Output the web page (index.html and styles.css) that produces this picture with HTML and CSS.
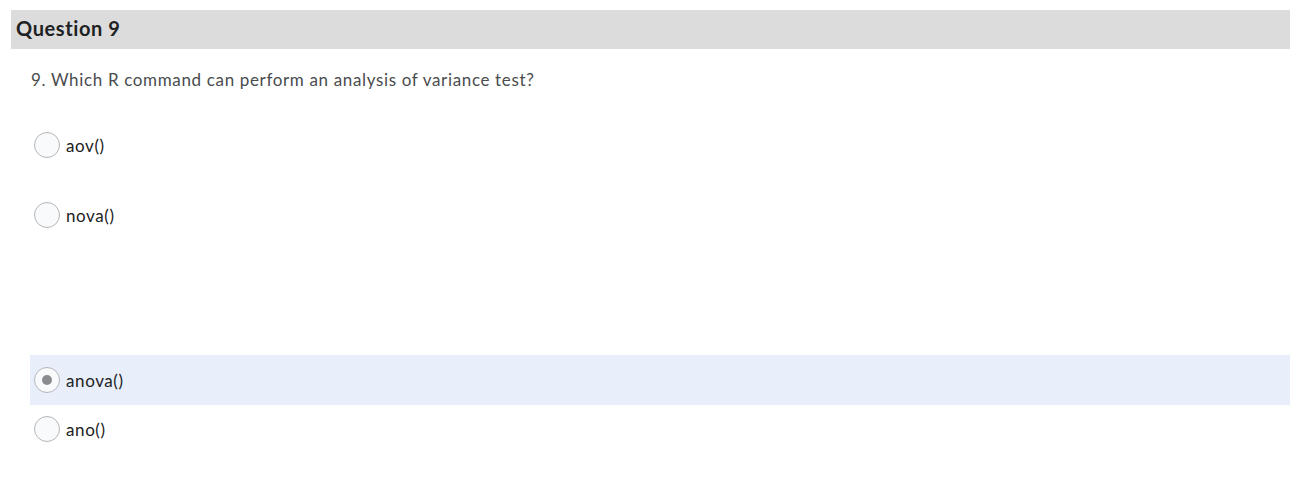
FILE: index.html
```html
<!DOCTYPE html>
<html>
<head>
<meta charset="utf-8">
<link rel="stylesheet" href="styles.css">
</head>
<body>
<div class="question">
  <div class="q-header"><h2 class="q-title">Question 9</h2></div>
  <div class="q-body">
    <p class="q-text">9. Which R command can perform an analysis of variance test?</p>
    <ul class="options">
      <li class="option opt-1"><span class="radio"></span><span class="label">aov()</span></li>
      <li class="option opt-2"><span class="radio"></span><span class="label">nova()</span></li>
      <li class="option opt-3 selected"><span class="radio"><span class="dot"></span></span><span class="label">anova()</span></li>
      <li class="option opt-4"><span class="radio"></span><span class="label">ano()</span></li>
    </ul>
  </div>
</div>
</body>
</html>
```
FILE: styles.css
```css
html, body {
  margin: 0;
  padding: 0;
  background: #ffffff;
}
body {
  font-family: Lato, "Open Sans", sans-serif;
  color: #494c4e;
  padding-top: 10px;
  padding-left: 11px;
}
.q-header {
  background: #dcdcdc;
  height: 39px;
  box-sizing: border-box;
  padding-bottom: 3px;
  display: flex;
  align-items: center;
  padding-left: 5px;
}
.q-title {
  margin: 0;
  font-size: 20px;
  font-weight: 700;
  letter-spacing: 0.6px;
  color: #202122;
}
.q-body {
  padding-left: 19px;
}
.q-text {
  margin: 19px 0 0 1px;
  font-size: 17px;
  letter-spacing: 0.65px;
  line-height: 24px;
  color: #494c4e;
}
.options {
  list-style: none;
  margin: 0;
  padding: 0;
}
.option {
  display: flex;
  align-items: center;
  height: 50px;
  padding-left: 4px;
  font-size: 17px;
  letter-spacing: 0.6px;
  color: #202122;
}
.opt-1 { margin-top: 28px; }
.opt-2 { margin-top: 20px; }
.opt-3 { margin-top: 115px; }
.opt-4 { margin-top: -1px; }
.selected { background: #e8effb; }
.radio {
  width: 24px;
  height: 24px;
  border: 1px solid #b4b6b9;
  border-radius: 50%;
  background: #f9fafc;
  display: flex;
  align-items: center;
  justify-content: center;
  flex: none;
}
.dot {
  width: 10px;
  height: 10px;
  border-radius: 50%;
  background: #8a8c90;
}
.label {
  margin-left: 6px;
}
```
